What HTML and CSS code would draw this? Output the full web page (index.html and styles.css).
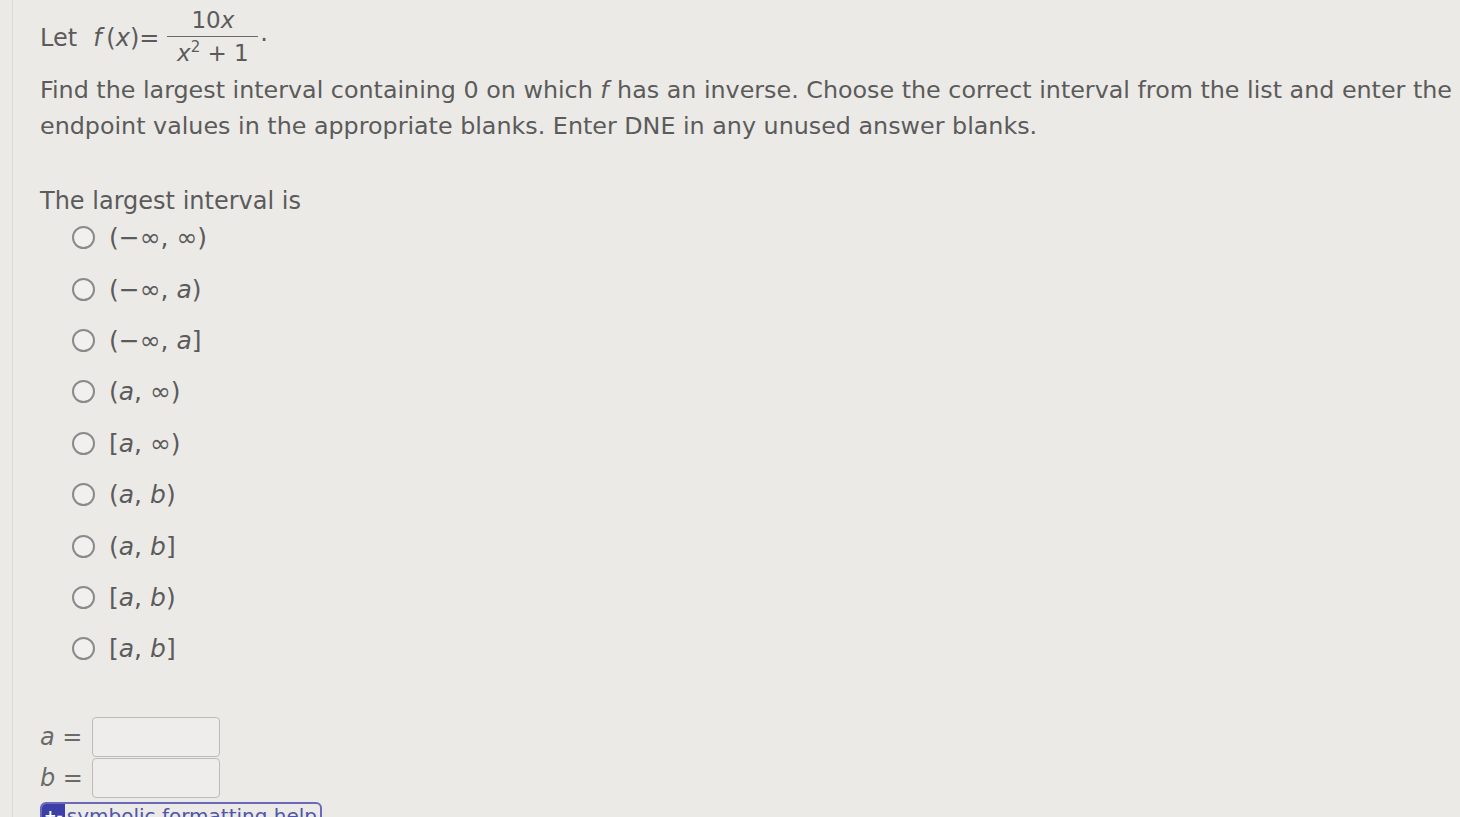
FILE: index.html
```html
<!DOCTYPE html>
<html>
<head>
<meta charset="utf-8">
<link rel="stylesheet" href="styles.css">
</head>
<body>
<div class="page">
  <div class="formula">
    <span class="let">Let</span>
    <span class="fx"><i>f</i>&thinsp;(<i>x</i>)=</span>
    <span class="frac">
      <span class="num">10<i>x</i></span>
      <span class="den"><i>x</i><sup>2</sup> + 1</span>
    </span><span class="dot">.</span>
  </div>
  <p class="question">Find the largest interval containing 0 on which <i class="fi">f</i>has an inverse. Choose the correct interval from the list and enter the endpoint values in the appropriate blanks. Enter DNE in any unused answer blanks.</p>
  <p class="lead">The largest interval is</p>
  <ul class="options">
    <li><span class="radio"></span><span>(−∞, ∞)</span></li>
    <li><span class="radio"></span><span>(−∞, <i>a</i>)</span></li>
    <li><span class="radio"></span><span>(−∞, <i>a</i>]</span></li>
    <li><span class="radio"></span><span>(<i>a</i>, ∞)</span></li>
    <li><span class="radio"></span><span>[<i>a</i>, ∞)</span></li>
    <li><span class="radio"></span><span>(<i>a</i>, <i>b</i>)</span></li>
    <li><span class="radio"></span><span>(<i>a</i>, <i>b</i>]</span></li>
    <li><span class="radio"></span><span>[<i>a</i>, <i>b</i>)</span></li>
    <li><span class="radio"></span><span>[<i>a</i>, <i>b</i>]</span></li>
  </ul>
  <div class="answers">
    <div class="ans"><span class="var"><i>a</i> =</span><span class="box"></span></div>
    <div class="ans"><span class="var"><i>b</i> =</span><span class="box"></span></div>
  </div>
  <div class="help"><span class="pm">+-</span><span class="helptext">symbolic formatting help</span></div>
</div>
</body>
</html>
```
FILE: styles.css
```css
html, body {
  margin: 0;
  padding: 0;
  background: #ebeae7;
  height: 100%;
  overflow: hidden;
}
body {
  font-family: "DejaVu Sans", Verdana, sans-serif;
  color: #5b5b5b;
  font-size: 23.8px;
}
.page {
  margin-left: 12px;
  border-left: 1px solid #dcdbd8;
  padding-left: 27px;
  padding-top: 6px;
  min-height: 100%;
  box-sizing: border-box;
}
i { font-style: italic; }
.fi { margin-right: 0.35em; }
.formula {
  display: flex;
  align-items: center;
  height: 64px;
  font-size: 24px;
}
.let { margin-right: 16px; }
.fx { margin-right: 8px; }
.frac {
  display: inline-flex;
  flex-direction: column;
  align-items: center;
  font-size: 23px;
}
.num {
  padding: 0 24px 2px;
  border-bottom: 1px solid #6a6a6a;
  line-height: 27px;
}
.den {
  line-height: 32px;
  padding: 0 6px;
}
.den sup {
  font-size: 15px;
  vertical-align: 9px;
  line-height: 0;
}
.dot { align-self: center; margin-left: 2px; margin-top: -10px; }
.question {
  margin: 0;
  line-height: 36px;
  padding-top: 2px;
  width: 1420px;
}
.lead {
  margin: 0;
  padding-top: 39px;
  line-height: 36px;
  font-size: 24px;
}
.options {
  list-style: none;
  margin: 0;
  padding: 0 0 0 32px;
  font-size: 25px;
}
.options li {
  display: flex;
  align-items: center;
  height: 51.4px;
}
.options li:first-child { margin-top: -7px; }
.radio {
  width: 19px;
  height: 19px;
  border: 2px solid #8a8a8a;
  border-radius: 50%;
  margin-right: 14px;
  background: #f1f0ee;
  flex: none;
}
.answers {
  margin-top: 42px;
  font-size: 24px;
}
.ans {
  display: flex;
  align-items: center;
  height: 41px;
}
.var {
  width: 52px;
  color: #6a6a6a;
}
.box {
  width: 126px;
  height: 38px;
  border: 1px solid #bdbcb9;
  border-radius: 4px;
  background: #eeedeb;
}
.help {
  display: inline-flex;
  align-items: center;
  margin-top: 2px;
  border: 2px solid #6a68b8;
  border-radius: 6px;
  height: 24px;
  padding-right: 3px;
  overflow: hidden;
  font-size: 20px;
}
.pm {
  background: #3b3fa6;
  color: #fff;
  font-weight: bold;
  padding: 0 2px;
  font-size: 15px;
  line-height: 24px;
}
.helptext {
  color: #5056a8;
  padding-left: 2px;
  line-height: 24px;
}
```
